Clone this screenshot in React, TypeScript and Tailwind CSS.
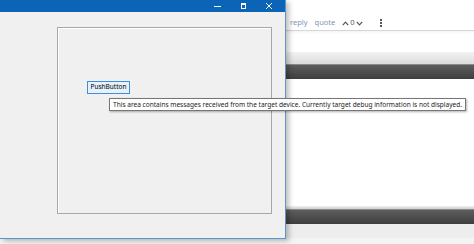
import React from 'react';

const font = { fontFamily: '"Segoe UI", "Noto Sans", "Liberation Sans", sans-serif' };

const PageBehind: React.FC = () => (
    <div className="flex flex-col w-[474px] h-[244px] bg-white">
        <div className="h-[16px]" />
        <div className="h-[14px] flex items-center pl-[290px] gap-[7px] text-[7.5px] text-[#8394b4]">
            <span>reply</span>
            <span>quote</span>
            <span className="flex items-center text-[#555] gap-[1px]">
                <svg width="7" height="5" viewBox="0 0 7 5"><path d="M0.8 4.2 L3.5 1.2 L6.2 4.2" fill="none" stroke="#555" strokeWidth="1.2" /></svg>
                <span className="text-[7.5px]">0</span>
                <svg width="7" height="5" viewBox="0 0 7 5"><path d="M0.8 0.8 L3.5 3.8 L6.2 0.8" fill="none" stroke="#555" strokeWidth="1.2" /></svg>
            </span>
            <span className="ml-[10px] flex flex-col gap-[1px]">
                <span className="w-[2px] h-[2px] bg-[#555]" />
                <span className="w-[2px] h-[2px] bg-[#555]" />
                <span className="w-[2px] h-[2px] bg-[#555]" />
            </span>
        </div>
        <div className="h-[4px] border-t border-[#d6d6d6] bg-gradient-to-b from-[#f4f4f4] to-white" />
        <div className="h-[18px]" />
        <div className="h-[12px] bg-gradient-to-b from-[#f2f2f2] to-[#dcdcdc]" />
        <div className="h-[15px] border-t border-[#8a8a8a] bg-gradient-to-b from-[#5e5e5e] to-[#3e3e3e]" />
        <div className="h-[127px]" />
        <div className="h-[3px] bg-gradient-to-b from-[#f0f0f0] to-[#cfcfcf]" />
        <div className="h-[15px] border-t border-[#8a8a8a] bg-gradient-to-b from-[#5e5e5e] to-[#3e3e3e]" />
        <div className="h-[14px] bg-[#ededed]" />
        <div className="flex-1 bg-[#f3f3f3]" />
    </div>
);

const TitleBar: React.FC = () => (
    <div className="h-[12px] bg-[#0b64b6] flex justify-end items-center pr-[3px] text-white">
        <div className="w-[26px] h-full flex items-center justify-center">
            <span className="w-[7px] h-px bg-white" />
        </div>
        <div className="w-[26px] h-full flex items-center justify-center">
            <span className="w-[5px] h-[6px] border border-white border-t-2" />
        </div>
        <div className="w-[26px] h-full flex items-center justify-center">
            <svg width="8" height="8" viewBox="0 0 8 8"><path d="M1 1 L7 7 M7 1 L1 7" stroke="white" strokeWidth="1" /></svg>
        </div>
    </div>
);

const App: React.FC = () => {
    return (
        <div className="relative w-[474px] h-[244px] overflow-hidden" style={font}>
            <PageBehind />

            <div className="absolute left-0 top-0 w-[286px] h-[239px] flex flex-col border-r border-b border-[#5a95d0] bg-[#f0f0f0] shadow-[3px_2px_5px_rgba(0,0,0,0.25)]">
                <TitleBar />
                <div className="flex-1 pt-[15px] pl-[57px] pr-[13px] pb-[24px]">
                    <div className="h-full border border-[#a8a8a8] shadow-[inset_1px_1px_0_#ffffff] pt-[53px] pl-[29px]">
                        <button className="h-[13px] w-[43px] bg-[#e5f1fb] border border-[#3c8fd8] text-[6.5px] text-black leading-none flex items-center justify-center">
                            PushButton
                        </button>
                    </div>
                </div>
            </div>

            <div className="absolute left-[109px] top-[98px] h-[13px] px-[3px] flex items-center bg-white border border-[#767676] shadow-[1px_1px_2px_rgba(0,0,0,0.3)] text-[6.55px] text-[#222] whitespace-nowrap">
                This area contains messages received from the target device. Currently target debug information is not displayed.
            </div>
        </div>
    );
};

export default App;
